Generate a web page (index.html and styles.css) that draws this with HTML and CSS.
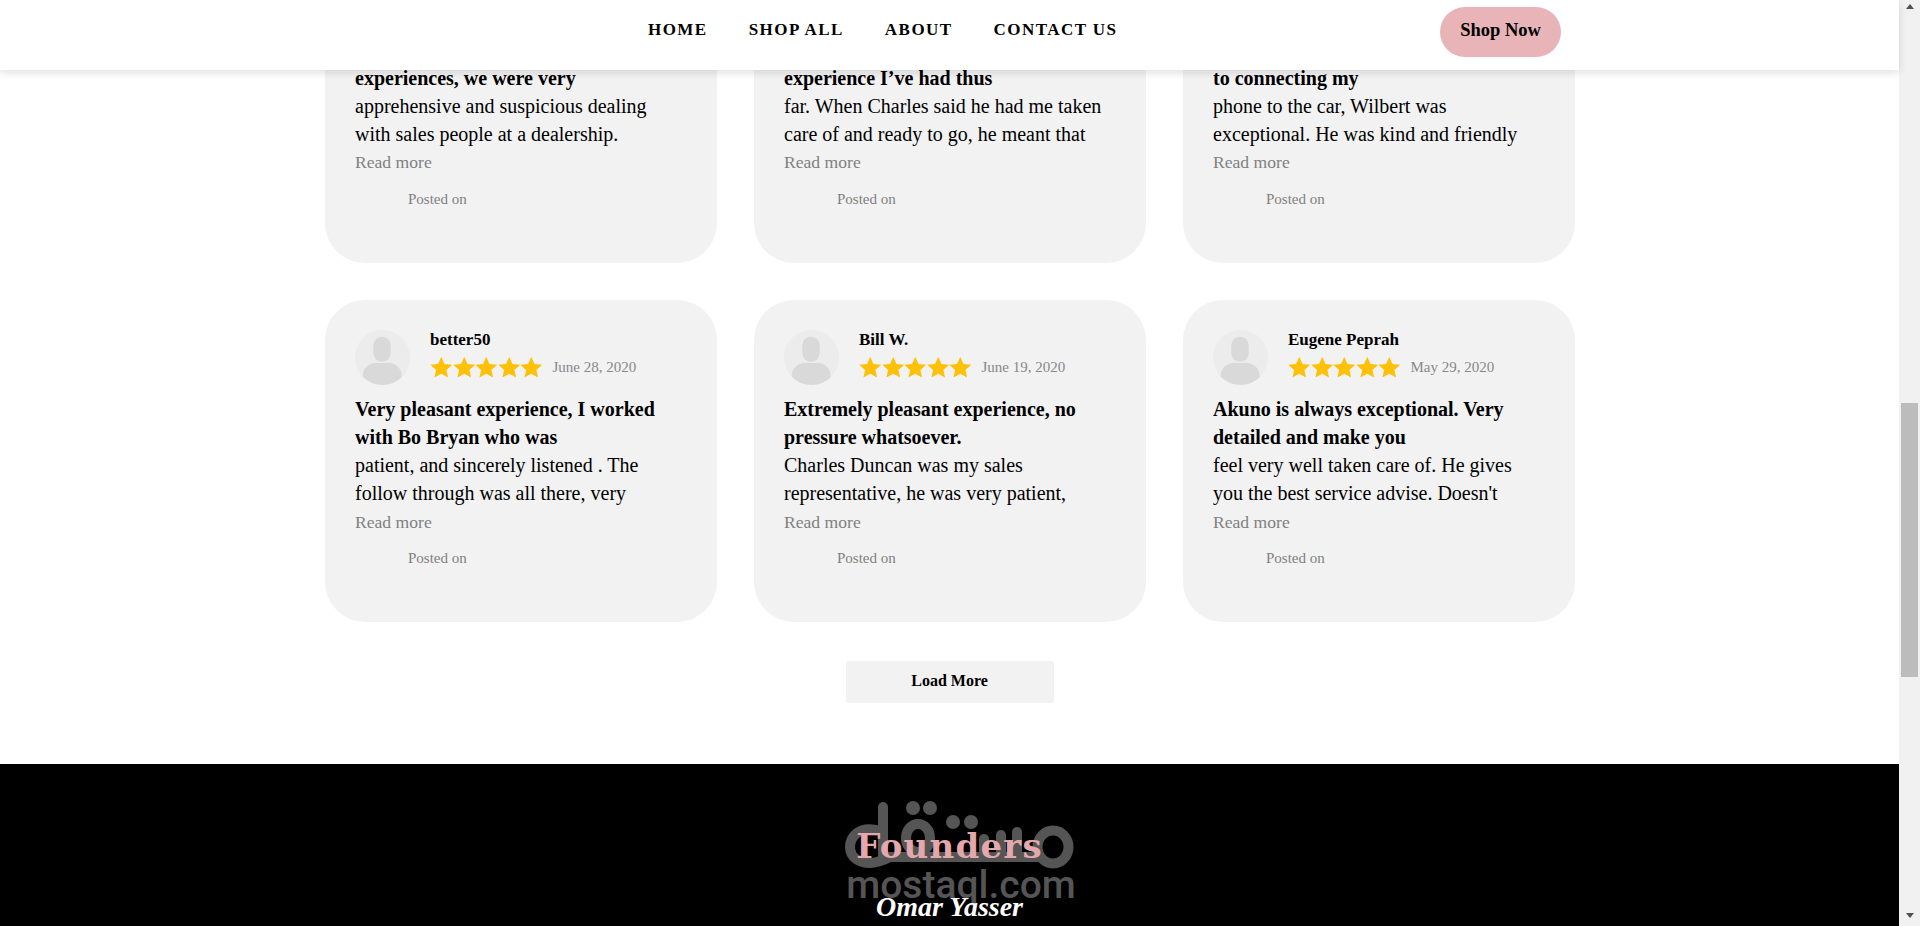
FILE: index.html
```html
<!DOCTYPE html>
<html>
<head>
  <meta charset="UTF-8">
  <title>Reviews</title>
  <link rel="stylesheet" href="styles.css">
</head>
<body>
  <svg class="defs" width="0" height="0">
    <symbol id="star" viewBox="0 0 24 24">
      <path d="M12 .8l3.4 7.6 8.3.9-6.2 5.5 1.8 8.2L12 18.8l-7.3 4.2 1.8-8.2L.3 9.3l8.3-.9z"/>
    </symbol>
    <symbol id="person" viewBox="0 0 55 55">
      <rect x="18.3" y="6.7" width="17.4" height="25" rx="8.7"/>
      <rect x="7.7" y="33" width="39" height="30" rx="13"/>
    </symbol>
  </svg>

  <div class="window">
    <div class="page">
      <nav class="topbar">
        <div class="nav-links">
          <a href="#">HOME</a>
          <a href="#">SHOP ALL</a>
          <a href="#">ABOUT</a>
          <a href="#">CONTACT US</a>
        </div>
        <button class="shop-btn">Shop Now</button>
      </nav>

      <section class="reviews">
        <article class="card card-cut">
          <p class="review-text"><b>experiences, we were very</b><br>apprehensive and suspicious dealing with sales people at a dealership.</p>
          <a class="read-more" href="#">Read more</a>
          <div class="posted">Posted on</div>
        </article>
        <article class="card card-cut">
          <p class="review-text"><b>experience I’ve had thus</b><br>far. When Charles said he had me taken care of and ready to go, he meant that</p>
          <a class="read-more" href="#">Read more</a>
          <div class="posted">Posted on</div>
        </article>
        <article class="card card-cut">
          <p class="review-text"><b>to connecting my</b><br>phone to the car, Wilbert was exceptional. He was kind and friendly</p>
          <a class="read-more" href="#">Read more</a>
          <div class="posted">Posted on</div>
        </article>

        <article class="card">
          <div class="card-head">
            <svg class="avatar"><use href="#person"/></svg>
            <div>
              <div class="name">better50</div>
              <div class="rating">
                <svg class="star"><use href="#star"/></svg><svg class="star"><use href="#star"/></svg><svg class="star"><use href="#star"/></svg><svg class="star"><use href="#star"/></svg><svg class="star"><use href="#star"/></svg>
                <span class="date">June 28, 2020</span>
              </div>
            </div>
          </div>
          <p class="review-text"><b>Very pleasant experience, I worked with Bo Bryan who was</b><br>patient, and sincerely listened . The follow through was all there, very</p>
          <a class="read-more" href="#">Read more</a>
          <div class="posted">Posted on</div>
        </article>
        <article class="card">
          <div class="card-head">
            <svg class="avatar"><use href="#person"/></svg>
            <div>
              <div class="name">Bill W.</div>
              <div class="rating">
                <svg class="star"><use href="#star"/></svg><svg class="star"><use href="#star"/></svg><svg class="star"><use href="#star"/></svg><svg class="star"><use href="#star"/></svg><svg class="star"><use href="#star"/></svg>
                <span class="date">June 19, 2020</span>
              </div>
            </div>
          </div>
          <p class="review-text"><b>Extremely pleasant experience, no pressure whatsoever.</b><br>Charles Duncan was my sales representative, he was very patient,</p>
          <a class="read-more" href="#">Read more</a>
          <div class="posted">Posted on</div>
        </article>
        <article class="card">
          <div class="card-head">
            <svg class="avatar"><use href="#person"/></svg>
            <div>
              <div class="name">Eugene Peprah</div>
              <div class="rating">
                <svg class="star"><use href="#star"/></svg><svg class="star"><use href="#star"/></svg><svg class="star"><use href="#star"/></svg><svg class="star"><use href="#star"/></svg><svg class="star"><use href="#star"/></svg>
                <span class="date">May 29, 2020</span>
              </div>
            </div>
          </div>
          <p class="review-text"><b>Akuno is always exceptional. Very detailed and make you</b><br>feel very well taken care of. He gives you the best service advise. Doesn't</p>
          <a class="read-more" href="#">Read more</a>
          <div class="posted">Posted on</div>
        </article>
      </section>

      <div class="load-row">
        <button class="load-more">Load More</button>
      </div>

      <footer class="footer">
        <div class="watermark">
          <svg class="wm-logo" viewBox="845 800 232 70">
            <g fill="none" stroke="#555" stroke-width="10" stroke-linecap="round">
              <path d="M883 807V857"/>
              <path d="M876 830C858 826 850 838 850 847C850 858 860 863 870 863C878 863 884 860 890 857H1040"/>
              <ellipse cx="918" cy="838" rx="12" ry="14"/>
              <path d="M984 857V839"/>
              <path d="M1001 857V835"/>
              <path d="M1017 857V832"/>
              <ellipse cx="1053" cy="847" rx="15.5" ry="16.5"/>
            </g>
            <g fill="#555">
              <circle cx="913" cy="808" r="7"/>
              <circle cx="930" cy="808" r="7"/>
              <circle cx="953" cy="822" r="7"/>
              <circle cx="971" cy="822" r="7"/>
            </g>
          </svg>
          <div class="wm-text">mostaql.com</div>
        </div>
        <h2>Founders</h2>
        <div class="founder">Omar Yasser</div>
      </footer>
    </div>

    <div class="scrollbar">
      <span class="arrow-up"></span>
      <div class="track"><div class="thumb"></div></div>
      <span class="arrow-down"></span>
    </div>
  </div>
</body>
</html>
```

FILE: styles.css
```css
body {
  margin: 0;
  font-family: "Liberation Serif", serif;
  color: #000;
  background-color: #fff;
}
a {
  color: inherit;
  text-decoration: none;
}
.defs {
  position: absolute;
}
.window {
  display: flex;
  height: 100vh;
  overflow: hidden;
}
.page {
  position: relative;
  flex: 1;
  min-width: 0;
}

/* top bar */
.topbar {
  position: absolute;
  top: 0;
  left: 0;
  right: 0;
  z-index: 5;
  height: 70px;
  box-sizing: border-box;
  display: flex;
  align-items: flex-start;
  justify-content: space-between;
  padding: 7px 338px 0 648px;
  background-color: #fff;
  box-shadow: 0 3px 8px rgba(0, 0, 0, 0.12);
}
.nav-links {
  display: flex;
  gap: 41px;
  margin-top: 13px;
  font-size: 17px;
  font-weight: bold;
  line-height: 20px;
  letter-spacing: 1.45px;
}
.shop-btn {
  width: 121px;
  height: 50px;
  border: none;
  border-radius: 25px;
  background-color: #e8b4b8;
  font-family: inherit;
  font-size: 18.5px;
  font-weight: bold;
  padding: 0 0 3px;
}

/* review cards */
.reviews {
  width: 1250px;
  margin-left: 325px;
  display: grid;
  grid-template-columns: repeat(3, 392px);
  gap: 37px;
}
.card {
  box-sizing: border-box;
  height: 322px;
  padding: 30px 42px 0 30px;
  background-color: #f2f2f2;
  border-radius: 40px;
}
.card-cut {
  height: 263px;
  padding-top: 64px;
  border-radius: 0 0 40px 40px;
}
.card-head {
  display: flex;
  gap: 20px;
  height: 55px;
  margin-bottom: 10px;
}
.avatar {
  width: 55px;
  height: 55px;
  flex: none;
  border-radius: 50%;
  background-color: #ececec;
  fill: #d9d9d9;
}
.name {
  font-size: 17px;
  font-weight: bold;
  line-height: 20px;
}
.rating {
  display: flex;
  align-items: center;
  height: 24px;
  margin-top: 5px;
}
.star {
  width: 22.5px;
  height: 22.5px;
  fill: #ffc107;
}
.date {
  margin-left: 10px;
  margin-top: 1px;
  font-size: 15px;
  color: #888;
}
.review-text {
  margin: 0;
  font-size: 20px;
  line-height: 28px;
  height: 112px;
  overflow: hidden;
}
.card-cut .review-text {
  height: 84px;
}
.read-more {
  display: block;
  margin-top: 1px;
  font-size: 17.6px;
  line-height: 28px;
  color: #808080;
}
.card-cut .read-more {
  margin-top: 0;
}
.posted {
  margin: 13px 0 0 53px;
  font-size: 15px;
  line-height: 18px;
  color: #808080;
}
.card-cut .posted {
  margin-top: 14px;
}

/* load more */
.load-row {
  display: flex;
  justify-content: center;
  margin: 39px 0 61px;
}
.load-more {
  width: 208px;
  height: 42px;
  border: none;
  border-radius: 3px;
  background-color: #f2f2f2;
  font-family: inherit;
  font-size: 16px;
  font-weight: bold;
  padding: 0 0 2px;
}

/* footer */
.footer {
  position: relative;
  height: 162px;
  padding-top: 62px;
  box-sizing: border-box;
  background-color: #000;
  text-align: center;
}
.footer h2 {
  position: relative;
  margin: 0;
  font-family: "DejaVu Serif", serif;
  font-size: 34px;
  line-height: 40px;
  letter-spacing: 1.2px;
  color: #e4a8ac;
}
.founder {
  position: relative;
  margin-top: 25px;
  font-size: 28px;
  font-weight: bold;
  font-style: italic;
  line-height: 32px;
  color: #fff;
}
.watermark {
  position: absolute;
  top: 36px;
  left: 845px;
  width: 232px;
  pointer-events: none;
}
.wm-logo {
  display: block;
  width: 232px;
  height: 70px;
}
.wm-text {
  font-family: Roboto, sans-serif;
  font-weight: 500;
  font-size: 39px;
  line-height: 31px;
  color: #555;
  white-space: nowrap;
}

/* scrollbar */
.scrollbar {
  position: relative;
  flex: none;
  width: 21px;
  display: flex;
  flex-direction: column;
  align-items: center;
  background-color: #f1f1f1;
}
.track {
  flex: 1;
  padding-top: 394px;
}
.thumb {
  width: 17px;
  height: 274px;
  background-color: #bcbcbc;
}
.arrow-up,
.arrow-down {
  width: 0;
  height: 0;
  border-left: 4.5px solid transparent;
  border-right: 4.5px solid transparent;
}
.arrow-up {
  margin-top: 4px;
  border-bottom: 5px solid #505050;
}
.arrow-down {
  margin-bottom: 8px;
  border-top: 5px solid #505050;
}
```
